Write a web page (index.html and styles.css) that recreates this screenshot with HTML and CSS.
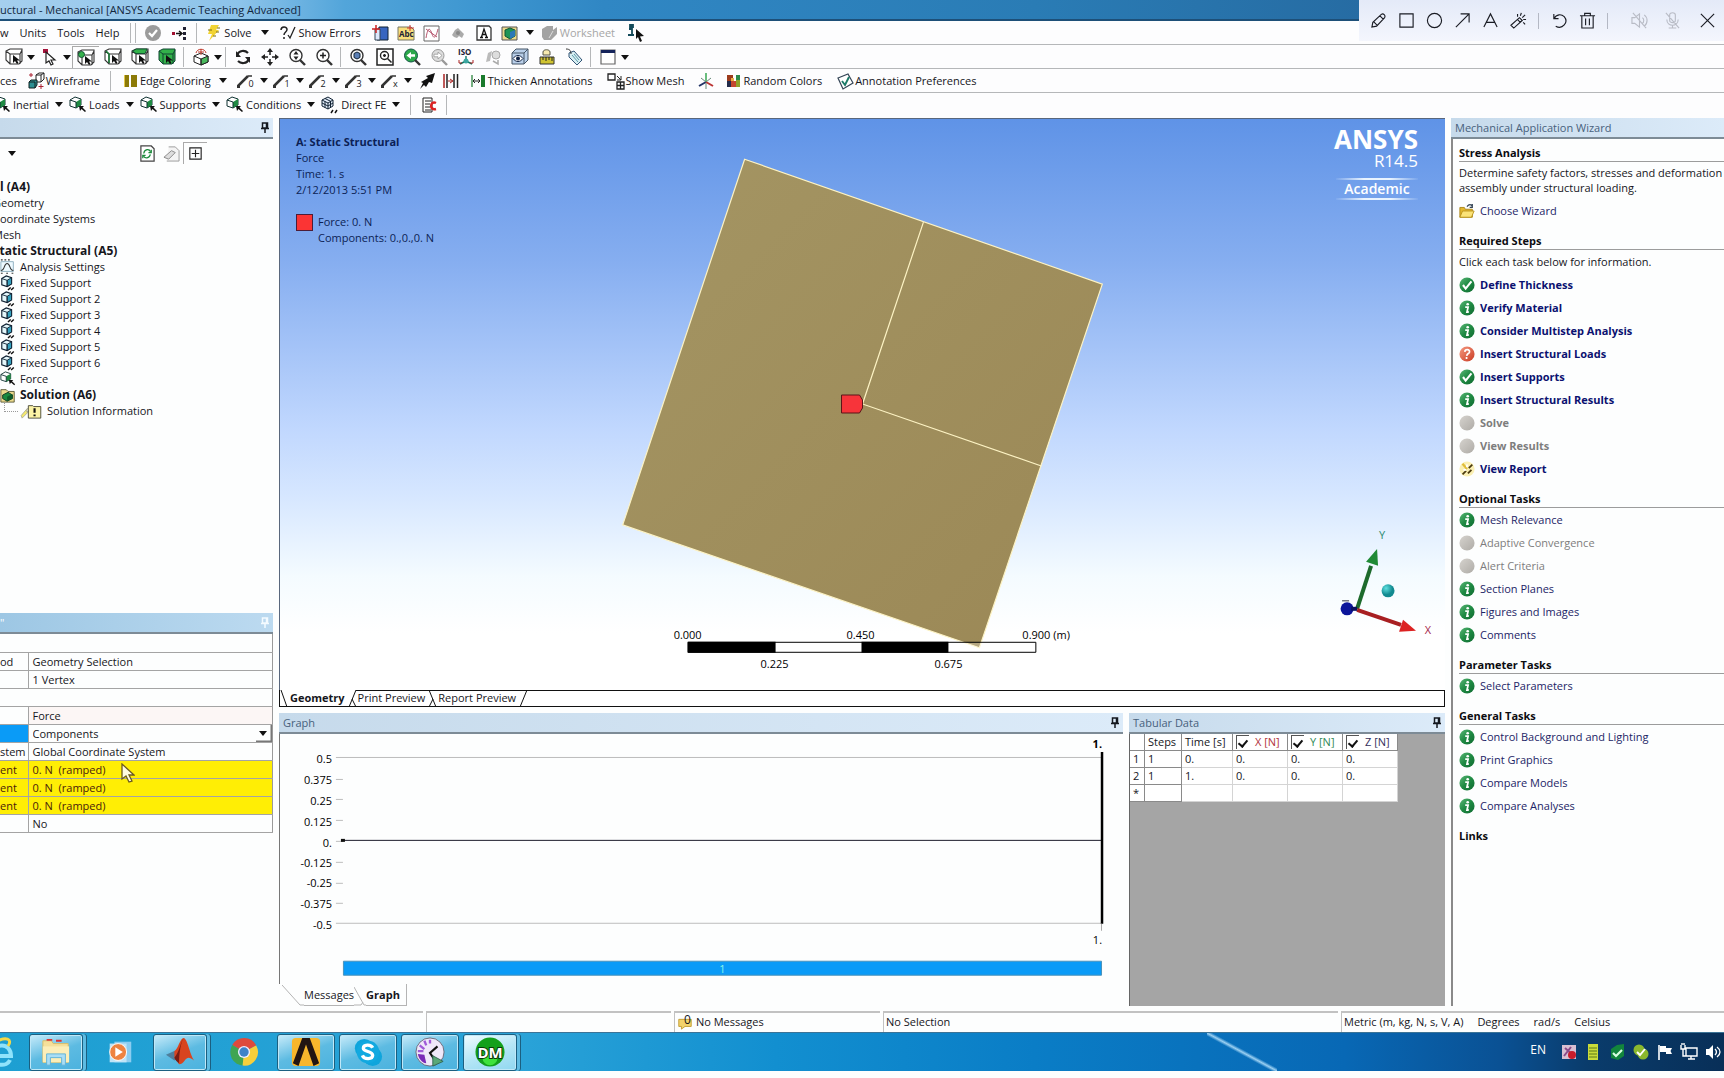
FILE: index.html
```html
<!DOCTYPE html>
<html lang="en">
<head>
<meta charset="utf-8">
<title>Static Structural - Mechanical</title>
<link rel="stylesheet" href="styles.css">
</head>
<body>
<svg class="sprite" aria-hidden="true">
  <defs>
    <linearGradient id="gGreen" x1="0" y1="0" x2="1" y2="1"><stop offset="0" stop-color="#5cb878"/><stop offset=".5" stop-color="#1f8a43"/><stop offset="1" stop-color="#0f6a30"/></linearGradient>
    <linearGradient id="gRed" x1="0" y1="0" x2="1" y2="1"><stop offset="0" stop-color="#f59a80"/><stop offset="1" stop-color="#c93a22"/></linearGradient>
    <linearGradient id="gGrey" x1="0" y1="0" x2="1" y2="1"><stop offset="0" stop-color="#d6d3ce"/><stop offset="1" stop-color="#aeaba6"/></linearGradient>
  </defs>
  <symbol id="caret" viewBox="0 0 8 5"><path d="M0 0h8L4 5z" fill="#111"/></symbol>
  <symbol id="pin" viewBox="0 0 10 12"><path d="M2.500 1h5v5h-5zM1 6.500h8M5 6.500V11M6.500 1v5" fill="none" stroke="currentColor" stroke-width="1.500"/></symbol>
  <symbol id="checkdot" viewBox="0 0 18 18"><circle cx="9" cy="9" r="8" fill="#9b9b9b"/><path d="M5 9l3 3 5-6" fill="none" stroke="#fff" stroke-width="2.200"/></symbol>
  <symbol id="branch" viewBox="0 0 18 18"><path d="M2 8h3v3H2z" fill="#a01030"/><path d="M6 9.500h5M9 7l3 2.500L9 12" fill="none" stroke="#111" stroke-width="1.500"/><path d="M13 3h3v3h-3zM13 8h3v3h-3zM13 13h3v3h-3z" fill="#223"/></symbol>
  <symbol id="bolt" viewBox="0 0 18 18"><path d="M6 1h8l-3 5h3L4 17l3-7H3z" fill="#f2d433"/><path d="M12 4h3M11 8h3M8 12h3M3 6h4" stroke="#7b6a10" stroke-width="1"/></symbol>
  <symbol id="question" viewBox="0 0 18 18"><path d="M2 6c0-4 6-4 6-.5C8 8 5 8 5 11M5 13v2" fill="none" stroke="#222" stroke-width="1.500"/><path d="M9 11l2 3 5-11" fill="none" stroke="#222" stroke-width="1.300"/></symbol>
  <symbol id="slice" viewBox="0 0 18 18"><path d="M8 3h9v13H6z" fill="#3865c0" stroke="#123"/><path d="M4 5h5v11H4z" fill="#dce8fb" stroke="#345"/><path d="M1 5h8M5 1v8" stroke="#c22" stroke-width="1.500"/></symbol>
  <symbol id="chart" viewBox="0 0 18 18"><path d="M1 2h15v15H1z" fill="#fff" stroke="#666"/><path d="M3 14c2-12 4-10 6-4s4 3 6-5M3 5l11 8" fill="none" stroke="#b6566e"/></symbol>
  <symbol id="greyblob" viewBox="0 0 18 18"><path d="M3 11l3-5 3-2 3 3 3 3-2 4-3-2-2 2-3-1z" fill="#aaa"/><circle cx="9" cy="9" r="2" fill="#888"/></symbol>
  <symbol id="lettera" viewBox="0 0 18 18"><path d="M2 2h12l2 2v12H2z" fill="#fff" stroke="#333" stroke-width="1.300"/><path d="M5 13.500h3M10 13.500h3M6.500 13L9 5l2.800 8M7.500 10.500h3.500" fill="none" stroke="#111" stroke-width="1.300"/></symbol>
  <symbol id="image" viewBox="0 0 18 18"><path d="M1 3h15v13H1z" fill="#ead98c" stroke="#555"/><path d="M4 6l5-2 5 2v6l-5 3-5-3z" fill="#1d9456" stroke="#153"/><path d="M9 8l5-2v6l-5 3z" fill="#2a78b8"/></symbol>
  <symbol id="worksheet" viewBox="0 0 18 18"><path d="M1 5l5-3h6v4l4-3v7l-6 6H3l-2-3z" fill="#a3a3a3"/><path d="M12 7l-4 7" stroke="#ddd"/></symbol>
  <symbol id="icursor" viewBox="0 0 18 18"><path d="M3 1h3v2H3zM2 5h3v6M1 11h6" fill="none" stroke="#134a5a" stroke-width="1.800"/><path d="M9 5l8 7-4 .5L15 17l-2 1-2-5-2 2z" fill="#111"/></symbol>
  <symbol id="cubecursor" viewBox="0 0 18 18"><path d="M1 3l4-2h12v12l-3 3H5l-4-4zM1 3l4 3v10M5 6h10v10M15 6l2-4" fill="#fff" stroke="#333" stroke-width="1.100"/><path d="M8 7v8l2-2 2 3 1.500-1-1.500-2.500h3z" fill="#111"/></symbol>
  <symbol id="cubepoint" viewBox="0 0 18 18"><use href="#cubecursor"/><circle cx="4.500" cy="5.500" r="3" fill="#37b24d" stroke="#153"/></symbol>
  <symbol id="cubeedge" viewBox="0 0 18 18"><use href="#cubecursor"/><path d="M2 3l3 3v9" stroke="#1b7a38" stroke-width="1.600" fill="none"/></symbol>
  <symbol id="cubeface" viewBox="0 0 18 18"><use href="#cubecursor"/><path d="M1.500 3l4-2H16l-2 4.500H5z" fill="#33b24a" stroke="#153"/></symbol>
  <symbol id="cubebody" viewBox="0 0 18 18"><path d="M1 3l4-2h12v12l-3 3H5l-4-4z" fill="#33b24a" stroke="#143"/><path d="M1 3l4 3v10M5 6h10v10M15 6l2-4" fill="none" stroke="#143"/><path d="M8 7v8l2-2 2 3 1.500-1-1.500-2.500h3z" fill="#111"/></symbol>
  <symbol id="pick" viewBox="0 0 18 18"><path d="M2 1h5v4H2z" fill="#a5123a"/><path d="M5 4v11l3-2 2 4 2-1-2-4h4z" fill="#fff" stroke="#222" stroke-width="1.200"/></symbol>
  <symbol id="cubeview" viewBox="0 0 18 18"><path d="M2 8l7-3 7 3v6l-7 3-7-3z" fill="#fff" stroke="#222"/><path d="M9 11l7-3v6l-7 3z" fill="#49b85c" stroke="#222"/><path d="M2 8l7 3v6" fill="none" stroke="#222"/><path d="M4 5c1-5 9-5 10 0M9 1v6M6 4h6" stroke="#c0392b" fill="none"/></symbol>
  <symbol id="rotate" viewBox="0 0 18 18"><path d="M3 7c2-5 8-5 11-2M15 11c-2 5-8 5-11 2" fill="none" stroke="#222" stroke-width="2.200"/><path d="M2 3v6h5zM16 15V9h-5z" fill="#222"/></symbol>
  <symbol id="pan" viewBox="0 0 18 18"><path d="M9 3v12M3 9h12" stroke="#222" stroke-width="1.500" stroke-dasharray="4 4"/><path d="M9 0l3 4H6zM9 18l3-4H6zM0 9l4-3v6zM18 9l-4-3v6z" fill="#222"/></symbol>
  <symbol id="lens" viewBox="0 0 18 18"><circle cx="8" cy="7.500" r="6" fill="#fff" stroke="#333" stroke-width="1.400"/><path d="M12 12l5 5" stroke="#333" stroke-width="2.400"/></symbol>
  <symbol id="zoomud" viewBox="0 0 18 18"><use href="#lens"/><path d="M8 3l2.500 3.500h-5zM8 12l2.500-3.500h-5z" fill="#222"/></symbol>
  <symbol id="zoomin" viewBox="0 0 18 18"><use href="#lens"/><path d="M8 4.500v6M5 7.500h6" stroke="#222" stroke-width="1.500"/></symbol>
  <symbol id="zoomfit" viewBox="0 0 18 18"><use href="#lens"/><path d="M5 5.500l3-1.500 3 1.500v4L8 11 5 9.500z" fill="#5b7fb5" stroke="#123"/></symbol>
  <symbol id="zoombox" viewBox="0 0 18 18"><path d="M1 1h16v16H1z" fill="#fff" stroke="#222" stroke-width="1.500"/><circle cx="8.500" cy="7.500" r="4" fill="none" stroke="#222" stroke-width="1.400"/><path d="M11.500 10.500l4 4M7 7.500h3M8.500 6v3" stroke="#222" stroke-width="1.500"/></symbol>
  <symbol id="zoomprev" viewBox="0 0 18 18"><circle cx="8" cy="7.500" r="6.500" fill="#2ba84a" stroke="#154"/><path d="M12 12l5 5" stroke="#333" stroke-width="2.400"/><path d="M3.500 7.500L8 4v2.200h4v2.600H8V11z" fill="#fff"/></symbol>
  <symbol id="zoomnext" viewBox="0 0 18 18"><circle cx="8" cy="7.500" r="6" fill="#ddd" stroke="#999"/><path d="M12 12l5 5" stroke="#999" stroke-width="2.400"/><path d="M12 7.500L8 4v2.200H4v2.600h4V11z" fill="#fff" stroke="#999" stroke-width=".8"/></symbol>
  <symbol id="lookat" viewBox="0 0 18 18"><path d="M2 14l2-9 4-2-2 10z" fill="#bbb"/><circle cx="12" cy="7" r="4" fill="#ddd" stroke="#aaa"/><path d="M9 13l5 3v-4" fill="none" stroke="#aaa" stroke-width="1.500"/></symbol>
  <symbol id="eyecube" viewBox="0 0 18 18"><path d="M1 5l4-4h12v11l-4 4H1z" fill="#b9cfe9" stroke="#456"/><path d="M1 5h12v11M13 5l4-4" fill="none" stroke="#456"/><path d="M2 10.500c3-4 7-4 10 0-3 4-7 4-10 0z" fill="#fff" stroke="#124"/><circle cx="7" cy="10.500" r="2" fill="#124"/></symbol>
  <symbol id="rescale" viewBox="0 0 18 18"><path d="M5 7V4c0-3 7-3 7 0v3z" fill="#f7eab0" stroke="#554"/><path d="M2 9h14v7H2z" fill="#cfc331" stroke="#333"/><path d="M5 9v3M8 9v4M11 9v3M14 9v4" stroke="#222"/></symbol>
  <symbol id="tag" viewBox="0 0 18 18"><path d="M4 5l5-2 8 9-5 5-8-8z" fill="#d8eef2" stroke="#357"/><path d="M7 7l6 7M9 6l5 6" stroke="#5a9aa8"/><path d="M1 1c4 0 5 2 5 5" fill="none" stroke="#333"/></symbol>
  <symbol id="windowbox" viewBox="0 0 18 18"><path d="M2 2h14v14H2z" fill="#fff" stroke="#666" stroke-width="1.200"/><path d="M2 2h14v3H2z" fill="#14235a"/></symbol>
  <symbol id="wire" viewBox="0 0 18 18"><path d="M9 3l3-2h5v6l-3 3H9zM9 3h5v7M14 3l3-2" fill="#fff" stroke="#222"/><path d="M2 10l2-2h6v5l-2 3H2z" fill="#2b8f92" stroke="#122"/><path d="M2 10h6v6" fill="none" stroke="#122"/><path d="M4 1v4M2 3h4M14 12v5M11.500 14.500h5" stroke="#a23"/></symbol>
  <symbol id="gold" viewBox="0 0 18 18"><path d="M3 3h5v12H3zM10 3h6v12h-6z" fill="#8c7a08"/><path d="M3 3h1v12H3z" fill="#e3c84b"/></symbol>
  <symbol id="edge" viewBox="0 0 18 18"><path d="M3 14L13 4" stroke="#333" stroke-width="2.500"/><path d="M13 4h4" stroke="#333" stroke-width="1.500"/><path d="M2 13h3v3H2z" fill="#333"/></symbol>
  <symbol id="blackarrow" viewBox="0 0 18 18"><path d="M17 1l-3 10-3-1-3 5-2-2-4 4 3-6-2-1 7-4-2-2z" fill="#111"/></symbol>
  <symbol id="bars" viewBox="0 0 18 18"><path d="M2 2v14" stroke="#a22" stroke-width="1.500"/><path d="M5 2v14M12 2v14M15.500 2v14" stroke="#222" stroke-width="1.500"/><path d="M6 9h4M8 7l3 2-3 2" stroke="#a22" fill="none"/></symbol>
  <symbol id="thick" viewBox="0 0 18 18"><path d="M3 3v12" stroke="#1a7a2c" stroke-width="1.200"/><path d="M12 3h4v12h-4z" fill="#1a7a2c"/><path d="M4 9h7M6 7L4 9l2 2M9 7l2 2-2 2" stroke="#222" fill="none"/></symbol>
  <symbol id="mesh" viewBox="0 0 18 18"><path d="M1 2h7v6H1zM10 10h7v7h-7zM13.500 10v7M10 13.500h7" fill="none" stroke="#222" stroke-width="1.300"/><path d="M10 4l4 4M14 4v4h-4" fill="none" stroke="#222"/></symbol>
  <symbol id="triadicon" viewBox="0 0 18 18"><path d="M9 1v9" stroke="#1b9b38" stroke-width="1.300"/><path d="M9 10l-7 4" stroke="#236" stroke-width="2"/><path d="M9 10l7 4" stroke="#b33" stroke-width="2"/><path d="M9 10L4 6M9 10l5-4M9 11v6" stroke="#687" stroke-width="1"/></symbol>
  <symbol id="colors" viewBox="0 0 18 18"><path d="M3 3h6v6H3z" fill="#9c3a1c"/><path d="M3 9h4v6H3z" fill="#222b4a"/><path d="M7 9h5v6H7z" fill="#c4472f"/><path d="M12 3h4v5h-4z" fill="#2a8a4a"/><path d="M12 8h4v7h-4z" fill="#8fa22a"/><path d="M7 6h3v3H7z" fill="#e8b14a"/></symbol>
  <symbol id="prefs" viewBox="0 0 18 18"><path d="M2 6l10-4 5 9-10 6z" fill="#fff" stroke="#345" stroke-width="1.200"/><path d="M6 9l3 4 4-8" fill="none" stroke="#1b7a68" stroke-width="1.900"/></symbol>
  <symbol id="cubeload" viewBox="0 0 18 18"><path d="M1 4l5-3 6 2v6l-5 3-6-2z" fill="#fff" stroke="#133"/><path d="M7 6l5-3v6l-5 3z" fill="#1f8a43"/><path d="M1 4l6 2v6" fill="none" stroke="#133"/><path d="M10 10h5l-1.500 1.500L17 15l-1 1-3.500-3L11 15z" fill="#111"/></symbol>
  <symbol id="cubefix" viewBox="0 0 18 18"><path d="M2 4l5-3 6 2v7l-5 3-6-2z" fill="#e4f7fb" stroke="#123" stroke-width="1.300"/><path d="M8 6l5-3v7l-5 3z" fill="#34a0bd" stroke="#123"/><path d="M2 4l6 2v7" fill="none" stroke="#123"/><path d="M9 17l3-3M12.500 17l3-3" stroke="#111" stroke-width="1.600"/></symbol>
  <symbol id="cubemesh" viewBox="0 0 18 18"><path d="M1 4l6-3 5 3v6l-5 3-6-3z" fill="#e4eefb" stroke="#123"/><path d="M1 4l6 3 5-3M7 7v6M4 2.500l6 3M4 5.500v6M1 7l6 3 5-3M9.500 5.500v6" fill="none" stroke="#123"/><path d="M10 17l2-3M14 17l2-3" stroke="#111" stroke-width="1.500"/></symbol>
  <symbol id="redbook" viewBox="0 0 18 18"><path d="M3 2h9v14H3z" fill="#fff" stroke="#222"/><path d="M5 5h6M5 8h5M5 11h5M5 14h6" stroke="#222"/><path d="M16 7c-6-3-7 8 0 6" fill="none" stroke="#d22" stroke-width="2.500"/></symbol>
  <symbol id="refresh" viewBox="0 0 18 18"><path d="M2 1h11l3 3v13H2z" fill="#fff" stroke="#444" stroke-width="1.300"/><path d="M5 9c1-5 6-5 7-2M12 10c-1 5-6 4-7 2M13 5v3h-3M4 14v-3h3" fill="none" stroke="#1a8a3a" stroke-width="1.300"/></symbol>
  <symbol id="sheet" viewBox="0 0 18 18"><path d="M6 2h7l4 4v11H4" fill="#f4f4f4" stroke="#999"/><path d="M1 13l8-7 4 2-7 7z" fill="#ddd" stroke="#888"/></symbol>
  <symbol id="plusbox" viewBox="0 0 18 18"><path d="M3 3h12v12H3zM5 9h8M9 5v8" fill="none" stroke="#222" stroke-width="1.200"/></symbol>
  <symbol id="analysis" viewBox="0 0 18 18"><path d="M1 3h14v11H1z" fill="#eefaff" stroke="#8ab"/><path d="M1 13c5 0 3-8 7-8s2 8 7 8M1 1h2M5 1h2M9 1h2M1 16h2M7 16h2M13 16h2" fill="none" stroke="#333" stroke-width="1.200"/></symbol>
  <symbol id="solution" viewBox="0 0 18 18"><path d="M1 3h6l2 2h7v12H1z" fill="#ead98c" stroke="#553"/><path d="M3 9l6-3 5 3v4l-6 3-5-3z" fill="#188a40" stroke="#132"/><path d="M8 11l6-3v5l-6 3z" fill="#0e5c2a"/></symbol>
  <symbol id="solinfo" viewBox="0 0 24 18"><path d="M1 14l7-8-1 4 3-1-8 8z" fill="#f5e96b" stroke="#aa9"/><path d="M9 3h5l1 1h8v13H9z" fill="#fbf3a6" stroke="#443"/><path d="M16 6v5M16 13v2" stroke="#111" stroke-width="2.400"/></symbol>
  <symbol id="info" viewBox="0 0 18 18"><circle cx="9" cy="9" r="8.500" fill="url(#gGreen)"/><circle cx="9.800" cy="4.800" r="1.500" fill="#fff"/><path d="M7 8h3.200L9 13.500h2" fill="none" stroke="#fff" stroke-width="2"/></symbol>
  <symbol id="ok" viewBox="0 0 18 18"><circle cx="9" cy="9" r="8.500" fill="url(#gGreen)"/><path d="M4.500 9l3 4L14 5" fill="none" stroke="#fff" stroke-width="2.400"/></symbol>
  <symbol id="ask" viewBox="0 0 18 18"><circle cx="9" cy="9" r="8.500" fill="url(#gRed)"/><path d="M6.500 6.500c.5-3.500 6-3 5.300.3C11.500 8.500 9 8.500 8.700 11M8.500 12.500v2" fill="none" stroke="#fff" stroke-width="1.900"/></symbol>
  <symbol id="off" viewBox="0 0 18 18"><circle cx="9" cy="9" r="8.500" fill="url(#gGrey)"/></symbol>
  <symbol id="report" viewBox="0 0 18 18"><circle cx="9" cy="9" r="8.500" fill="#fbf0b4"/><path d="M4 3l5 6" stroke="#e0bd3a" stroke-width="2.500"/><path d="M15 4l-4 4M8 11l-4 4M14 10l-4 4" stroke="#4c3c10" stroke-width="2"/><path d="M9 4v3M5 10h3" stroke="#fff" stroke-width="2"/></symbol>
  <symbol id="folder" viewBox="0 0 18 18"><path d="M1 5h5l1 2h8v9H1z" fill="#e4b82e" stroke="#a78214"/><path d="M4 9h13l-3 7H1z" fill="#fbe377" stroke="#b8921c"/><path d="M9 4c2-3 5-3 6 0M15 1v4h-3" fill="none" stroke="#345" stroke-width="1.300"/></symbol>
</svg>

<header class="titlebar">
  <h1 class="title">uctural - Mechanical [ANSYS Academic Teaching Advanced]</h1>
</header>

<div class="capture" role="toolbar" aria-label="Annotation">
  <button class="cap" aria-label="Pencil"><svg viewBox="0 0 18 18"><path d="M2 16l1-5L12 2.500c2-1.500 5 1 3.500 3.500L7 15zM10.500 4l3.500 3.500M4 10.500L7.500 14"/></svg></button>
  <button class="cap" aria-label="Rectangle"><svg viewBox="0 0 18 18"><path d="M2 2h14v14H2z"/></svg></button>
  <button class="cap" aria-label="Ellipse"><svg viewBox="0 0 18 18"><circle cx="9" cy="9" r="7.500"/></svg></button>
  <button class="cap" aria-label="Arrow"><svg viewBox="0 0 18 18"><path d="M2 16L16 2M7 2h9v9"/></svg></button>
  <button class="cap" aria-label="Text"><svg viewBox="0 0 18 18"><path d="M2 16L9 2l7 14M4.500 11h9"/></svg></button>
  <button class="cap" aria-label="Magic wand"><svg viewBox="0 0 18 18"><path d="M1 14L10 6l3 3-9 8zM8 8l3 3M8 2v3M12 1l-1 3M16 3l-3 3M17 8h-3M16 13l-2-2"/></svg></button>
  <span class="cap-sep"></span>
  <button class="cap" aria-label="Undo"><svg viewBox="0 0 18 18"><path d="M3 2v5h5M3 7c3-5 8-5 11-2 5 6-2 14-9 10"/></svg></button>
  <button class="cap" aria-label="Delete"><svg viewBox="0 0 18 18"><path d="M1 4h16M3 4v13h12V4M6 4V1.500h6V4M7 7v7M11 7v7"/></svg></button>
  <span class="cap-sep"></span>
  <button class="cap dim" aria-label="Sound off"><svg viewBox="0 0 18 18"><path d="M1 6h3l5-4v14l-5-4H1zM2 1l14 16M12 6c2 1 2 5 0 6M14 3c4 3 4 9 0 12"/></svg></button>
  <button class="cap dim" aria-label="Microphone off"><svg viewBox="0 0 18 18"><path d="M6 3c0-3 6-3 6 0v6c0 3-6 3-6 0zM3 8c0 8 12 8 12 0M9 14v3M5 17h8M2 1l14 16"/></svg></button>
  <button class="cap" aria-label="Close"><svg viewBox="0 0 18 18"><path d="M2 2l14 14M16 2L2 16"/></svg></button>
</div>

<nav class="toolbar menu">
  <button class="label">w</button><button class="label">Units</button><button class="label">Tools</button><button class="label">Help</button>
  <span class="sep"></span><span class="sep"></span>
  <button class="tool" aria-label="Check"><svg><use href="#checkdot"/></svg></button>
  <button class="tool" aria-label="Branch"><svg><use href="#branch"/></svg></button>
  <span class="sep"></span>
  <button class="cmd"><svg><use href="#bolt"/></svg>Solve</button><button class="drop" aria-label="Solve options"><svg><use href="#caret"/></svg></button>
  <button class="cmd"><svg><use href="#question"/></svg>Show Errors</button>
  <span class="space"></span>
  <button class="tool" aria-label="Section plane"><svg><use href="#slice"/></svg></button>
  <button class="tool" aria-label="Label"><svg viewBox="0 0 18 18"><path d="M1 3h13l3 3v10H1z" fill="#f8df7c" stroke="#776"/><text x="2" y="13" class="glyph">Abc</text><path d="M13 1v6M10 4h7" stroke="#c33"/></svg></button>
  <button class="tool" aria-label="Chart"><svg><use href="#chart"/></svg></button>
  <button class="tool" aria-label="Probe"><svg><use href="#greyblob"/></svg></button>
  <button class="tool" aria-label="Comment"><svg><use href="#lettera"/></svg></button>
  <button class="tool" aria-label="Figure"><svg><use href="#image"/></svg></button><button class="drop near" aria-label="Figure options"><svg><use href="#caret"/></svg></button>
  <button class="cmd" disabled><svg><use href="#worksheet"/></svg>Worksheet</button>
  <button class="tool" aria-label="Selection information"><svg><use href="#icursor"/></svg></button>
</nav>

<nav class="toolbar pick">
  <button class="tool" aria-label="Select type"><svg><use href="#cubecursor"/></svg></button><button class="drop near" aria-label="Select type options"><svg><use href="#caret"/></svg></button>
  <button class="tool" aria-label="Select mode"><svg><use href="#pick"/></svg></button><button class="drop near" aria-label="Select mode options"><svg><use href="#caret"/></svg></button>
  <button class="tool on" aria-label="Vertex"><svg><use href="#cubepoint"/></svg></button>
  <button class="tool" aria-label="Edge"><svg><use href="#cubeedge"/></svg></button>
  <button class="tool" aria-label="Face"><svg><use href="#cubeface"/></svg></button>
  <button class="tool" aria-label="Body"><svg><use href="#cubebody"/></svg></button>
  <span class="sep"></span>
  <button class="tool" aria-label="Extend"><svg><use href="#cubeview"/></svg></button><button class="drop near" aria-label="Extend options"><svg><use href="#caret"/></svg></button>
  <span class="sep"></span>
  <button class="tool" aria-label="Rotate"><svg><use href="#rotate"/></svg></button>
  <button class="tool" aria-label="Pan"><svg><use href="#pan"/></svg></button>
  <button class="tool" aria-label="Zoom"><svg><use href="#zoomud"/></svg></button>
  <button class="tool" aria-label="Box zoom"><svg><use href="#zoomin"/></svg></button>
  <span class="sep"></span>
  <button class="tool" aria-label="Fit"><svg><use href="#zoomfit"/></svg></button>
  <button class="tool" aria-label="Magnifier"><svg><use href="#zoombox"/></svg></button>
  <button class="tool" aria-label="Previous view"><svg><use href="#zoomprev"/></svg></button>
  <button class="tool" aria-label="Next view"><svg><use href="#zoomnext"/></svg></button>
  <button class="tool" aria-label="Isometric"><svg viewBox="0 0 18 18"><text x="1" y="7" class="glyph">ISO</text><path d="M9 8v6M9 13l-6 3M9 13l6 3" stroke="#176" stroke-width="1.400"/><circle cx="9" cy="13" r="2.500" fill="#3aa6a0"/><path d="M2 12v3h3M16 12v3h-3" fill="none" stroke="#a22"/></svg></button>
  <button class="tool" aria-label="Look at"><svg><use href="#lookat"/></svg></button>
  <button class="tool" aria-label="Manage views"><svg><use href="#eyecube"/></svg></button>
  <button class="tool" aria-label="Rescale"><svg><use href="#rescale"/></svg></button>
  <button class="tool" aria-label="Tags"><svg><use href="#tag"/></svg></button>
  <span class="sep"></span>
  <button class="tool" aria-label="Viewports"><svg><use href="#windowbox"/></svg></button><button class="drop near" aria-label="Viewport options"><svg><use href="#caret"/></svg></button>
</nav>

<nav class="toolbar display">
  <button class="label">ces</button>
  <button class="cmd"><svg><use href="#wire"/></svg>Wireframe</button>
  <span class="sep"></span>
  <button class="cmd"><svg><use href="#gold"/></svg>Edge Coloring</button><button class="drop" aria-label="Edge coloring options"><svg><use href="#caret"/></svg></button>
  <button class="edge">0<svg><use href="#edge"/></svg></button><button class="drop near" aria-label="Edge 0"><svg><use href="#caret"/></svg></button>
  <button class="edge">1<svg><use href="#edge"/></svg></button><button class="drop near" aria-label="Edge 1"><svg><use href="#caret"/></svg></button>
  <button class="edge">2<svg><use href="#edge"/></svg></button><button class="drop near" aria-label="Edge 2"><svg><use href="#caret"/></svg></button>
  <button class="edge">3<svg><use href="#edge"/></svg></button><button class="drop near" aria-label="Edge 3"><svg><use href="#caret"/></svg></button>
  <button class="edge">x<svg><use href="#edge"/></svg></button><button class="drop near" aria-label="Edge x"><svg><use href="#caret"/></svg></button>
  <button class="tool" aria-label="Direction"><svg><use href="#blackarrow"/></svg></button>
  <button class="tool" aria-label="Spacing"><svg><use href="#bars"/></svg></button>
  <button class="cmd"><svg><use href="#thick"/></svg>Thicken Annotations</button>
  <button class="cmd"><svg><use href="#mesh"/></svg>Show Mesh</button>
  <button class="tool" aria-label="Triad"><svg><use href="#triadicon"/></svg></button>
  <button class="cmd"><svg><use href="#colors"/></svg>Random Colors</button>
  <button class="cmd"><svg><use href="#prefs"/></svg>Annotation Preferences</button>
</nav>

<nav class="toolbar loads">
  <button class="cmd first"><svg><use href="#cubeload"/></svg>Inertial</button><button class="drop" aria-label="Inertial options"><svg><use href="#caret"/></svg></button>
  <button class="cmd"><svg><use href="#cubeload"/></svg>Loads</button><button class="drop" aria-label="Loads options"><svg><use href="#caret"/></svg></button>
  <button class="cmd"><svg><use href="#cubeload"/></svg>Supports</button><button class="drop" aria-label="Supports options"><svg><use href="#caret"/></svg></button>
  <button class="cmd"><svg><use href="#cubeload"/></svg>Conditions</button><button class="drop" aria-label="Conditions options"><svg><use href="#caret"/></svg></button>
  <button class="cmd"><svg><use href="#cubemesh"/></svg>Direct FE</button><button class="drop" aria-label="Direct FE options"><svg><use href="#caret"/></svg></button>
  <span class="sep"></span>
  <button class="tool" aria-label="Commands"><svg><use href="#redbook"/></svg></button>
  <span class="sep"></span>
</nav>

<main class="workspace">
  <aside class="side">
    <section class="outline">
      <div class="bar"><span></span><svg class="pin"><use href="#pin"/></svg></div>
      <div class="outline-tools">
        <button class="drop" aria-label="Filter"><svg><use href="#caret"/></svg></button>
        <div class="outline-icons">
          <button class="tool" aria-label="Refresh"><svg><use href="#refresh"/></svg></button>
          <button class="tool" aria-label="Clear"><svg><use href="#sheet"/></svg></button>
          <button class="tool on" aria-label="Expand all"><svg><use href="#plusbox"/></svg></button>
        </div>
      </div>
      <ul class="tree">
        <li class="lv0 strong">l (A4)</li>
        <li class="lv1">Geometry</li>
        <li class="lv1">Coordinate Systems</li>
        <li class="lv1">Mesh</li>
        <li class="lv1 strong">Static Structural (A5)</li>
        <li class="lv2"><svg><use href="#analysis"/></svg>Analysis Settings</li>
        <li class="lv2"><svg><use href="#cubefix"/></svg>Fixed Support</li>
        <li class="lv2"><svg><use href="#cubefix"/></svg>Fixed Support 2</li>
        <li class="lv2"><svg><use href="#cubefix"/></svg>Fixed Support 3</li>
        <li class="lv2"><svg><use href="#cubefix"/></svg>Fixed Support 4</li>
        <li class="lv2"><svg><use href="#cubefix"/></svg>Fixed Support 5</li>
        <li class="lv2"><svg><use href="#cubefix"/></svg>Fixed Support 6</li>
        <li class="lv2"><svg><use href="#cubeload"/></svg>Force</li>
        <li class="lv2 strong"><svg><use href="#solution"/></svg>Solution (A6)</li>
        <li class="lv3"><i class="twig"></i><svg><use href="#solinfo"/></svg>Solution Information</li>
      </ul>
    </section>
    <section class="details">
      <div class="bar active"><span>"</span><svg class="pin"><use href="#pin"/></svg></div>
      <table class="props">
        <colgroup><col class="key"><col></colgroup>
        <tr><td colspan="2"></td></tr>
        <tr><th>od</th><td>Geometry Selection</td></tr>
        <tr><th></th><td>1 Vertex</td></tr>
        <tr><td colspan="2"></td></tr>
        <tr><th></th><td class="readonly">Force</td></tr>
        <tr><th class="picked"></th><td class="field"><select aria-label="Define by"><option>Components</option></select><svg class="fieldcaret" viewBox="0 0 16 17"><path d="M0 16.500h15.500V0" fill="none" stroke="#777" stroke-width="2"/><path d="M3 6h8l-4 5z" fill="#111"/></svg></td></tr>
        <tr><th>stem</th><td>Global Coordinate System</td></tr>
        <tr class="missing"><th>ent</th><td>0. N&nbsp; (ramped)</td></tr>
        <tr class="missing"><th>ent</th><td>0. N&nbsp; (ramped)</td></tr>
        <tr class="missing"><th>ent</th><td>0. N&nbsp; (ramped)</td></tr>
        <tr><th></th><td>No</td></tr>
      </table>
      <svg class="pointer" viewBox="0 0 14 20"><path d="M1 1v15l4-3 3 6 3-1-3-6h5z" fill="#fffbe0" stroke="#6b5a20" stroke-width="1.300"/></svg>
    </section>
  </aside>

  <div class="center">
    <section class="viewport">
      <svg class="scene" viewBox="0 0 1166 571" preserveAspectRatio="xMidYMid meet">
        <defs>
          <linearGradient id="plate" x1="0" y1="0" x2="1" y2="1"><stop offset="0" stop-color="#a49563"/><stop offset="1" stop-color="#9b8856"/></linearGradient>
          <radialGradient id="teal" cx=".35" cy=".3"><stop offset="0" stop-color="#5fe0e0"/><stop offset="1" stop-color="#128a90"/></radialGradient>
        </defs>
        <path d="M465 40L823 165L700 529L343 406z" fill="url(#plate)" stroke="#fdf3c4" stroke-width="1.200"/>
        <path d="M644 103L583 285L762 347" fill="none" stroke="#fdf3c4" stroke-width="1.200"/>
        <path d="M562 276h18l3 5v8l-3 5h-18z" fill="#f7343a" stroke="#5a1418"/>
        <g class="scale">
          <path d="M408.500 523.500h348v10h-348z" fill="#fff" fill-opacity=".25" stroke="#000"/>
          <path d="M408 523h88v11h-88zM582 523h87v11h-87z" fill="#000"/>
          <text x="408" y="520" text-anchor="middle">0.000</text>
          <text x="581" y="520" text-anchor="middle">0.450</text>
          <text x="743" y="520">0.900 (m)</text>
          <text x="495" y="549" text-anchor="middle">0.225</text>
          <text x="669" y="549" text-anchor="middle">0.675</text>
        </g>
        <g class="axes">
          <path d="M1078 490L1092 447" stroke="#1d6a2c" stroke-width="4"/>
          <path d="M1098 430l1 17-12-4z" fill="#1f8a35"/>
          <path d="M1078 491L1122 506" stroke="#a81f22" stroke-width="4"/>
          <path d="M1137 512l-17 1 4-12z" fill="#dc2222"/>
          <circle cx="1068" cy="490" r="6.500" fill="#0b149a"/>
          <path d="M1072 490h6" stroke="#0b1060" stroke-width="4"/>
          <path d="M1063 482h7" stroke="#334"/>
          <circle cx="1109" cy="472" r="6.500" fill="url(#teal)"/>
          <text x="1103" y="420" text-anchor="middle" fill="#2b8a70">Y</text>
          <text x="1149" y="515" text-anchor="middle" fill="#a5284a">X</text>
        </g>
      </svg>
      <div class="legend">
        <strong>A: Static Structural</strong>
        <span>Force</span><span>Time: 1. s</span><span>2/12/2013 5:51 PM</span>
        <div class="key-row"><i class="swatch"></i><div><span>Force: 0. N</span><span>Components: 0.,0.,0. N</span></div></div>
      </div>
      <div class="brand"><b class="brand-name">ANSYS</b><span class="brand-rel">R14.5</span><span class="brand-lic">Academic</span></div>
    </section>

    <nav class="viewtabs">
      <svg viewBox="0 0 8 17"><path d="M1 0l6 17"/></svg>
      <button class="current">Geometry</button>
      <svg viewBox="0 0 8 17"><path d="M8 0L1 17M4 9l4 8"/></svg>
      <button>Print Preview</button>
      <svg viewBox="0 0 8 17"><path d="M1 0l7 17M5 9L1 17"/></svg>
      <button>Report Preview</button>
      <svg viewBox="0 0 8 17"><path d="M8 0L1 17"/></svg>
    </nav>

    <div class="bottom">
      <section class="graph">
        <div class="bar"><h2>Graph</h2><svg class="pin"><use href="#pin"/></svg></div>
        <div class="graph-body">
          <svg class="plot" viewBox="0 0 844 250">
            <path d="M56 23.500H822M56 189.500H822" stroke="#bdbdbd"/>
            <path d="M56 45.500h7M56 65.500h7M56 86.500h7M56 107.500h7M56 128.500h7M56 149.500h7M56 169.500h7" stroke="#bdbdbd"/>
            <path d="M63 106.500H822" stroke="#1c1c2c"/><path d="M61 105h4v3h-4z" fill="#111"/>
            <path d="M823 18V190" stroke="#000" stroke-width="2.500"/><path d="M822.500 190v7" stroke="#aaa"/>
            <g text-anchor="end">
              <text x="52" y="29">0.5</text><text x="52" y="50">0.375</text><text x="52" y="71">0.25</text><text x="52" y="92">0.125</text><text x="52" y="113">0.</text><text x="52" y="133">-0.125</text><text x="52" y="153">-0.25</text><text x="52" y="174">-0.375</text><text x="52" y="195">-0.5</text>
              <text x="823" y="14" font-weight="bold">1.</text><text x="823" y="210">1.</text>
            </g>
            <path d="M63.500 227.500h759v14h-759z" fill="#0a9bf7" stroke="#4a93bb"/>
            <text x="443" y="239" text-anchor="middle" fill="#8df5e8">1</text>
          </svg>
        </div>
        <nav class="paneltabs">
          <svg viewBox="0 0 22 22"><path d="M0 1l18 20h4"/></svg><button>Messages</button><svg class="mid" viewBox="0 0 12 22"><path d="M0 3l10 18h2M0 21h7l2-3"/></svg><button class="current">Graph</button>
        </nav>
      </section>
      <section class="tabular">
        <div class="bar"><h2>Tabular Data</h2><svg class="pin"><use href="#pin"/></svg></div>
        <div class="tabular-body">
          <table class="steps">
            <colgroup><col class="c-n"><col class="c-s"><col class="c-t"><col class="c-v"><col class="c-v"><col class="c-v"></colgroup>
            <thead><tr><th></th><th>Steps</th><th>Time [s]</th>
              <th><label class="x"><input type="checkbox" checked>X [N]</label></th>
              <th><label class="y"><input type="checkbox" checked>Y [N]</label></th>
              <th><label class="z"><input type="checkbox" checked>Z [N]</label></th></tr></thead>
            <tbody>
              <tr><th>1</th><td>1</td><td>0.</td><td>0.</td><td>0.</td><td>0.</td></tr>
              <tr><th>2</th><td>1</td><td>1.</td><td>0.</td><td>0.</td><td>0.</td></tr>
              <tr><th>*</th><td></td><td></td><td></td><td></td><td></td></tr>
            </tbody>
          </table>
        </div>
      </section>
    </div>
  </div>

  <aside class="wizard">
    <div class="bar"><h2>Mechanical Application Wizard</h2></div>
    <div class="wizard-body">
      <h3>Stress Analysis</h3>
      <p class="about">Determine safety factors, stresses and deformation<br>assembly under structural loading.</p>
      <a class="task" href="#"><svg><use href="#folder"/></svg>Choose Wizard</a>
      <h3>Required Steps</h3>
      <p class="hint">Click each task below for information.</p>
      <div class="required">
        <a class="task" href="#"><svg><use href="#ok"/></svg>Define Thickness</a>
        <a class="task" href="#"><svg><use href="#info"/></svg>Verify Material</a>
        <a class="task" href="#"><svg><use href="#info"/></svg>Consider Multistep Analysis</a>
        <a class="task" href="#"><svg><use href="#ask"/></svg>Insert Structural Loads</a>
        <a class="task" href="#"><svg><use href="#ok"/></svg>Insert Supports</a>
        <a class="task" href="#"><svg><use href="#info"/></svg>Insert Structural Results</a>
        <a class="task off" href="#"><svg><use href="#off"/></svg>Solve</a>
        <a class="task off" href="#"><svg><use href="#off"/></svg>View Results</a>
        <a class="task" href="#"><svg><use href="#report"/></svg>View Report</a>
      </div>
      <h3>Optional Tasks</h3>
      <a class="task" href="#"><svg><use href="#info"/></svg>Mesh Relevance</a>
      <a class="task off" href="#"><svg><use href="#off"/></svg>Adaptive Convergence</a>
      <a class="task off" href="#"><svg><use href="#off"/></svg>Alert Criteria</a>
      <a class="task" href="#"><svg><use href="#info"/></svg>Section Planes</a>
      <a class="task" href="#"><svg><use href="#info"/></svg>Figures and Images</a>
      <a class="task" href="#"><svg><use href="#info"/></svg>Comments</a>
      <h3>Parameter Tasks</h3>
      <a class="task" href="#"><svg><use href="#info"/></svg>Select Parameters</a>
      <h3>General Tasks</h3>
      <a class="task" href="#"><svg><use href="#info"/></svg>Control Background and Lighting</a>
      <a class="task" href="#"><svg><use href="#info"/></svg>Print Graphics</a>
      <a class="task" href="#"><svg><use href="#info"/></svg>Compare Models</a>
      <a class="task" href="#"><svg><use href="#info"/></svg>Compare Analyses</a>
      <h3 class="bare">Links</h3>
    </div>
  </aside>
</main>

<div class="status">
  <span class="cell"></span>
  <span class="cell"></span>
  <span class="cell"><svg viewBox="0 0 18 18"><path d="M2 6h14v8H9l-4 3v-3H2z" fill="#f3d36b" stroke="#c09a2c"/></svg><b class="count">0</b>No Messages</span>
  <span class="cell">No Selection</span>
  <span class="cell units"><span>Metric (m, kg, N, s, V, A)</span><span>Degrees</span><span>rad/s</span><span>Celsius</span></span>
</div>

<footer class="taskbar">
  <svg class="ie" viewBox="0 0 14 32"><path d="M-8 20h19c0-14-18-14-18 0 0 11 14 11 17 4" fill="none" stroke="#8fe3fb" stroke-width="4"/><path d="M-4 6c10-6 17-3 12 4" fill="none" stroke="#f3d84a" stroke-width="3"/></svg>
  <div class="apps">
    <button class="app open stack" aria-label="Explorer"><svg viewBox="0 0 32 32"><path d="M2 4h9l2 3h16v20H2z" fill="#f5e09a" stroke="#d9bd68"/><path d="M6 3h6M16 4h6" stroke="#d33" stroke-width="2"/><path d="M2 10h28v17H2z" fill="#fbeeb8"/><path d="M6 30V18h20v12h-4v-8H10v8z" fill="#a9def5" stroke="#5fb2d8"/></svg></button>
    <button class="app" aria-label="Media player"><svg viewBox="0 0 32 32"><path d="M10 5h18v22H10z" fill="#8ccdf0"/><path d="M5 7h18v20H5z" fill="#bfe4f7"/><circle cx="14" cy="16" r="9" fill="#ee8340" stroke="#fff"/><path d="M11 11l8 5-8 5z" fill="#fff"/></svg></button>
    <button class="app open stack" aria-label="MATLAB"><svg viewBox="0 0 32 32"><path d="M1 19l9-4 6 6-6 4z" fill="#4f7f9c"/><path d="M10 15c4-2 6-14 10-14 4 1 6 16 11 24-5-4-7-4-10 0-2 3-4 4-6 4l-5-7z" fill="#d8441f"/><path d="M20 1c-3 4-5 16-5 27-2-2-4-3-5-6 5-5 7-18 10-21z" fill="#7a1c12"/></svg></button>
    <button class="app" aria-label="Chrome"><svg viewBox="0 0 32 32"><path d="M16 16L3.500 8.500A14.500 14.500 0 0 1 29 9z" fill="#de4a3c"/><path d="M16 16L3.500 8.500a14.500 14.500 0 0 0 11 22z" fill="#3fa552"/><path d="M16 16L29 9a14.500 14.500 0 0 1-14.500 21.500z" fill="#f7cf3b"/><circle cx="16" cy="16" r="6.500" fill="#eef"/><circle cx="16" cy="16" r="5" fill="#3d82c8"/></svg></button>
    <button class="app open" aria-label="Workbench"><svg viewBox="0 0 32 32"><rect x="1" y="1" width="30" height="30" rx="4" fill="#f7b62c"/><path d="M12 1h8l10 27-6 3-8-23-8 23-6-3z" fill="#221512"/></svg></button>
    <button class="app open" aria-label="Skype"><svg viewBox="0 0 32 32"><circle cx="12" cy="12" r="10" fill="#0fa5dc"/><circle cx="21" cy="21" r="10" fill="#0fa5dc"/><circle cx="16" cy="16" r="12" fill="#12a9e0"/><path d="M21 11.500c-2-4-10-3.500-10 .5s10 3 10 7.500-9 5-11 0" fill="none" stroke="#fff" stroke-width="3.500"/></svg></button>
    <button class="app open" aria-label="Clock"><svg viewBox="0 0 32 32"><circle cx="16" cy="16" r="15" fill="#efe8fa" stroke="#667"/><path d="M16 3v4M10 4l2 5M5 9l5 4M3 15h6" stroke="#a05ad8" stroke-width="2.500"/><path d="M3 18l7 1 2 9c-5-1-8-5-9-10z" fill="#7a2ab8"/><path d="M24 10l-8 7 4 6" fill="none" stroke="#111" stroke-width="2.200"/><path d="M19 20l11 6-11 5z" fill="#5aa877" stroke="#365"/></svg></button>
    <button class="app open focus stack" aria-label="DesignModeler"><svg viewBox="0 0 32 32"><circle cx="16" cy="16" r="15.500" fill="#14a01c"/><circle cx="16" cy="22" r="8" fill="#3fe23c"/><text class="dm" x="16" y="22" text-anchor="middle">DM</text></svg></button>
  </div>
  <div class="tray">
    <span class="lang">EN</span>
    <svg viewBox="0 0 18 18"><path d="M2 2h14v14H2z" fill="#d8bfd2"/><path d="M4 13l7-9M5 5l8 7" stroke="#8a4a8a" stroke-width="2"/><circle cx="12" cy="12" r="4" fill="#c81c2c"/></svg>
    <svg viewBox="0 0 18 18"><path d="M4 1h10v16H4z" fill="#c9dc3a"/><path d="M5 5h8M5 8h8M5 11h8M5 14h8" stroke="#5c7a18"/></svg>
    <svg viewBox="0 0 18 18"><path d="M3 6l6-4 7-1v12l-6 4-7-2z" fill="#12853c"/><path d="M5 10l3 3 6-6" fill="none" stroke="#d8ffe0" stroke-width="2.200"/></svg>
    <svg viewBox="0 0 18 18"><circle cx="7" cy="7" r="5.500" fill="#8ab82e"/><circle cx="11" cy="11" r="5.500" fill="#8ab82e"/><path d="M5 9l3 3 5-6" fill="none" stroke="#fff" stroke-width="1.900"/></svg>
    <svg viewBox="0 0 18 18"><path d="M3 2v15" stroke="#fff" stroke-width="1.600"/><path d="M4 3h6v6H4zM10 5h6l-1.500 3 1.500 3h-6z" fill="#fff"/></svg>
    <svg viewBox="0 0 18 18"><path d="M6 5h11v8H6zM8 16h7M11 13v3M1 2v4h4V2M3 6v7h3M2 0v2M4 0v2" fill="none" stroke="#fff" stroke-width="1.400"/></svg>
    <svg viewBox="0 0 18 18"><path d="M2 6h3l4-4v14l-4-4H2z" fill="#fff"/><path d="M11 6c2 2 2 4 0 6M13 4c4 3 4 7 0 10" fill="none" stroke="#fff" stroke-width="1.300"/></svg>
  </div>
</footer>
</body>
</html>
```
FILE: styles.css
```css
* { box-sizing: border-box; }
body {
  margin: 0;
  min-height: 100vh;
  display: flex;
  flex-direction: column;
  background: #fdfefe;
  color: #16161c;
  font: 11px/16px "Open Sans", "Noto Sans", sans-serif;
  overflow-x: hidden;
  padding-bottom: 7px;
}
button {
  margin: 0;
  padding: 0;
  border: 0;
  background: none;
  color: inherit;
  font: inherit;
  white-space: nowrap;
}
h1, h2, h3, p, ul { margin: 0; padding: 0; font: inherit; }
a { color: inherit; text-decoration: none; }
.sprite { position: absolute; width: 0; height: 0; }
.glyph { font: bold 8px "Open Sans", sans-serif; fill: #223; }

.titlebar {
  height: 21px;
  border-bottom: 2px solid #1d4f78;
  background: linear-gradient(90deg, #a5cfee 0, #8cc3ea 14%, #52a5da 20%, #3d96d0 28%, #3087c4 35%, #2a7cb5 60%, #266ba2 80%);
}
.title { line-height: 19px; color: #12263c; white-space: nowrap; }

.capture {
  position: absolute;
  top: 0;
  right: 0;
  width: 365px;
  height: 41px;
  padding: 0 3px 0 5px;
  display: flex;
  align-items: center;
  background: linear-gradient(#e4eaf8, #f4f6fd);
}
.cap { width: 28px; height: 28px; display: grid; place-items: center; }
.cap svg { width: 17px; height: 17px; fill: none; stroke: #1a1c24; stroke-width: 1.2; }
.cap.dim { width: 33px; }
.cap.dim svg { stroke: #b9bcc6; }
.cap:last-child { margin-left: auto; }
.cap-sep { width: 1px; height: 16px; margin: 0 6px; background: #b4b8c4; }
.cap-sep + .dim { margin-left: 9px; }

.toolbar {
  height: 24px;
  display: flex;
  align-items: center;
  border-bottom: 1px solid #b5b7b9;
  background: #fdfdfe;
  white-space: nowrap;
}
.toolbar svg { width: 18px; height: 18px; display: block; flex: none; }
.label { margin-right: 11px; }
.tool { width: 27px; height: 22px; display: grid; place-items: center; flex: none; }
.tool.on { border-left: 1px solid #aaa; border-top: 1px solid #aaa; }
.cmd { display: flex; align-items: center; gap: 1px; }
.cmd:disabled { color: #a6a6a6; }
.drop { width: 28px; display: grid; place-items: center; flex: none; }
.drop.near { width: 14px; }
.toolbar .drop svg, .drop svg { width: 8px; height: 5px; }
.sep { width: 1px; height: 20px; margin: 0 4px; background: #b5b7b9; }
.space { width: 6px; }
.menu .tool { width: 26px; }
.menu .label + .sep { margin: 0; }
.menu .sep + .cmd, .menu .near + .cmd { margin-left: 4px; }
.menu .cmd + .tool { margin-left: 8px; }
.edge { position: relative; width: 22px; height: 20px; font-size: 9px; line-height: 20px; text-align: right; padding: 3px 3px 0 0; }
.toolbar .edge svg { position: absolute; left: 0; top: 1px; }
.pick { padding-top: 1px; }
.pick .drop { width: 8px; }
.pick .drop + .tool { margin-left: 1px; }
.pick .sep { margin: 0 3px; }
.display .label { margin-right: 0; }
.display .drop:not(.near) { width: 24px; }
.display .tool { width: 24px; }
.display .sep { margin: 0 0 0 10px; }
.display .cmd { margin-left: 10px; }
.display .tool + .cmd { margin-left: 6px; }
.display .cmd + .cmd { margin-left: 14px; }
.display .cmd + .tool { margin-left: 10px; }
.loads { height: 25px; border-bottom: 0; padding-bottom: 2px; }
.loads .drop { width: 20px; }
.loads .cmd { gap: 2px; }
.loads .first { margin-left: -7px; }

.workspace {
  flex: 1;
  display: grid;
  grid-template-columns: 273px minmax(0, 1fr) 273px;
  gap: 6px;
  padding-bottom: 5px;
}
.bar {
  height: 21px;
  display: flex;
  align-items: center;
  justify-content: space-between;
  padding: 0 3px 0 4px;
  border-bottom: 2px solid #7d8b96;
  background: linear-gradient(90deg, #c6daeb, #dcebf9);
  color: #48617c;
}
.bar.active { background: linear-gradient(90deg, #9dc7e4, #bcdaf0); color: #fff; padding-left: 0; }
.pin { width: 10px; height: 12px; color: #14181f; }
.active .pin { color: #f4fbff; }

.side { display: grid; grid-template-rows: 495px minmax(0, 1fr); overflow: hidden; }
.outline-tools { height: 28px; padding-left: 8px; padding-right: 66px; display: flex; align-items: center; justify-content: space-between; }
.outline-tools .drop { width: 8px; }
.outline-icons { display: flex; }
.outline-icons .tool { width: 24px; }
.outline-icons svg { width: 17px; height: 17px; }
.tree { list-style: none; padding-top: 12px; }
.tree li { height: 16px; display: flex; align-items: center; gap: 4px; white-space: nowrap; }
.tree svg { width: 16px; height: 16px; flex: none; }
.tree .strong { font-size: 12px; font-weight: bold; }
.lv1 { margin-left: -7px; }
.tree .lv3 svg { width: 24px; }
.twig { width: 14px; height: 9px; margin-left: 4px; margin-right: -3px; align-self: flex-start; border-left: 1px dotted #999; border-bottom: 1px dotted #999; }

.details { position: relative; }
.props { width: 100%; border-collapse: collapse; table-layout: fixed; border-right: 1px solid #9a9a9a; }
.props .key { width: 28px; }
.props th, .props td { height: 18px; padding: 0 4px; border-bottom: 1px solid #a4a4a4; line-height: 17px; text-align: left; font-weight: normal; white-space: nowrap; }
.props th { padding: 0; border-right: 1px solid #a4a4a4; }
.props .readonly { background: #fcf6f5; }
.props .picked { background: #0a9bf7; }
.missing { background: #ffee05; color: #4a220c; }
.props .field { position: relative; padding: 0; }
.field select { display: block; width: 100%; height: 17px; padding: 0 4px; border: 0; appearance: none; background: none; color: inherit; font: inherit; }
.fieldcaret { position: absolute; right: 0; top: 0; width: 16px; height: 17px; }
.pointer { position: absolute; left: 121px; top: 150px; width: 14px; height: 20px; }

.center { display: flex; flex-direction: column; min-width: 0; }
.viewport {
  position: relative;
  flex: 571 1 0;
  min-height: 400px;
  border-left: 1px solid #59677d;
  border-top: 1px solid #59677d;
  background: linear-gradient(#5f93e7 0, #86aef0 25%, #c0d7fe 54%, #d8e8ff 67%, #f4fbff 80%, #fff 90%);
}
.scene { position: absolute; left: 0; top: 0; width: 100%; height: 100%; }
.scene text { font: 11px "Open Sans", sans-serif; }
.legend { position: absolute; left: 16px; top: 15px; display: flex; flex-direction: column; color: #0c1f55; }
.legend span { display: block; }
.key-row { display: flex; gap: 5px; margin-top: 16px; }
.swatch { width: 17px; height: 17px; background: #fb3434; border: 1px solid #4c1d38; }
.brand { position: absolute; top: 7px; right: 27px; display: flex; flex-direction: column; align-items: flex-end; color: #fff; }
.brand-name { font-size: 26px; line-height: 26px; }
.brand-rel { font-size: 17px; line-height: 18px; }
.brand-lic {
  width: 82px;
  margin-top: 8px;
  font-size: 14px;
  line-height: 18px;
  font-weight: 600;
  text-align: center;
  border-style: solid;
  border-width: 2px 0;
  border-image: linear-gradient(90deg, transparent, #e9f4ff 35%, #e9f4ff 65%, transparent) 2;
}

.viewtabs { height: 17px; display: flex; align-items: stretch; border: 1px solid #111; border-top: 0; background: linear-gradient(90deg, transparent 76px, #111 76px) top / 100% 1px no-repeat, #fff; }
.viewtabs svg { width: 8px; height: 17px; fill: none; stroke: #111; }
.viewtabs button { padding: 0 3px 0 2px; line-height: 16px; }
.viewtabs .current, .paneltabs .current { font-weight: bold; }

.bottom { flex: 293 1 0; min-height: 293px; margin-top: 6px; display: grid; grid-template-columns: minmax(0, 1fr) 316px; gap: 6px; }
.graph, .tabular { display: flex; flex-direction: column; min-width: 0; }
.graph-body { flex: 1; border-left: 1px solid #777; }
.plot { display: block; width: 100%; }
.plot text { font: 11px "Open Sans", sans-serif; }
.plot text[font-weight] { font-weight: bold; }
.paneltabs { height: 22px; display: flex; padding-left: 3px; }
.paneltabs svg { width: 22px; height: 22px; fill: none; stroke: #b4b4b4; }
.paneltabs .mid { width: 12px; }
.paneltabs button { border-bottom: 1px solid #b4b4b4; }
.paneltabs .current { padding-right: 6px; border-right: 1px solid #b4b4b4; }
.tabular-body { flex: 1; background: #a5a5a5; border-left: 1px solid #666; }

.steps { border-collapse: separate; border-spacing: 0; table-layout: fixed; width: 268px; background: #fff; }
.c-n { width: 15px; }
.c-s { width: 37px; }
.c-t { width: 51px; }
.c-v { width: 55px; }
.steps th, .steps td { height: 17px; padding: 0 0 0 3px; line-height: 16px; text-align: left; font-weight: normal; border-right: 1px solid #d4d4d4; border-bottom: 1px solid #d4d4d4; white-space: nowrap; }
.steps thead th, .steps th, .steps td:nth-child(2) { border-color: #8a8a8a; }
.steps label { display: flex; align-items: center; gap: 6px; }
.steps input { appearance: none; width: 13px; height: 14px; margin: 0; border-left: 1px solid #555; border-top: 1px solid #555; display: grid; place-items: center; }
.steps input:checked::before { content: ""; width: 4px; height: 7px; border: solid #111; border-width: 0 2px 2px 0; transform: rotate(40deg); }
.x { color: #b23440; }
.y { color: #2f8a55; }
.z { color: #34305c; }

.wizard { display: flex; flex-direction: column; overflow: hidden; }
.wizard-body { flex: 1; padding-left: 6px; border-left: 2px solid #8a8a8a; }
.wizard h3 { padding-top: 11px; height: 28px; border-bottom: 1px solid #9c9c9c; font-weight: bold; color: #0c0c10; }
.wizard h3:first-child { height: 23px; padding-top: 6px; }
.wizard .bare { border-bottom: 0; }
.about { padding: 3px 0 4px; line-height: 15px; white-space: nowrap; }
.hint { line-height: 23px; }
.task { height: 23px; display: flex; align-items: center; gap: 5px; color: #1c2566; }
.task svg { width: 16px; height: 16px; }
.required .task { font-weight: bold; color: #0b1170; }
.task.off, .required .off { color: #7d7d7d; }

.status { height: 21px; display: grid; grid-template-columns: 423px 245px 206px minmax(0, 1fr) 383px; column-gap: 3px; }
.cell { display: flex; align-items: center; padding: 0 2px 2px; border-top: 2px solid #c2c2c2; border-left: 1px solid #c2c2c2; white-space: nowrap; }
.cell:first-child { border-left: 0; }
.cell svg { width: 16px; height: 16px; }
.count { margin-left: -9px; margin-right: 5px; font-weight: normal; font-size: 12px; line-height: 14px; align-self: flex-start; }
.units { gap: 14px; }

.taskbar {
  height: 39px;
  display: flex;
  align-items: center;
  border-top: 1px solid #3c7396;
  background: linear-gradient(to top right, transparent 46%, #9bd0f2 50%, transparent 54%) 73% 0 / 70px 38px no-repeat, linear-gradient(90deg, #1d9fd2 0, #2aa3d8 30%, #128fd0 45%, #0a7dc6 60%, #0868b5 78%, #0a5194 87%, #0a3c6c 92%, #082f58 100%);
  color: #fff;
}
.ie { width: 14px; height: 32px; margin-right: 15px; }
.apps { display: flex; gap: 4px; }
.app { width: 58px; height: 37px; display: grid; place-items: center; border-radius: 3px; }
.app svg { width: 30px; height: 30px; }
.open { border: 1px solid #1b5f80; background: linear-gradient(160deg, #c9ecfa, #5dbbe2 50%, #4bb2de); box-shadow: inset 0 0 0 1px #bfe8f8; }
.open.focus { background: linear-gradient(160deg, #f2fcff, #b6e6f6 50%, #8fd7f0); }
.stack { width: 54px; margin-right: 4px; box-shadow: inset 0 0 0 1px #bfe8f8, 3px 0 0 #5dbbe2, 4px 0 0 #1b5f80; }
.dm { font: bold 16px "Open Sans", sans-serif; fill: #fff; stroke: #0a3a0a; stroke-width: 2px; paint-order: stroke; }
.tray { margin-left: auto; display: flex; align-items: center; gap: 6px; padding-right: 2px; }
.tray svg { width: 18px; height: 18px; }
.lang { margin-right: 8px; margin-bottom: 4px; font-size: 12px; }
```
